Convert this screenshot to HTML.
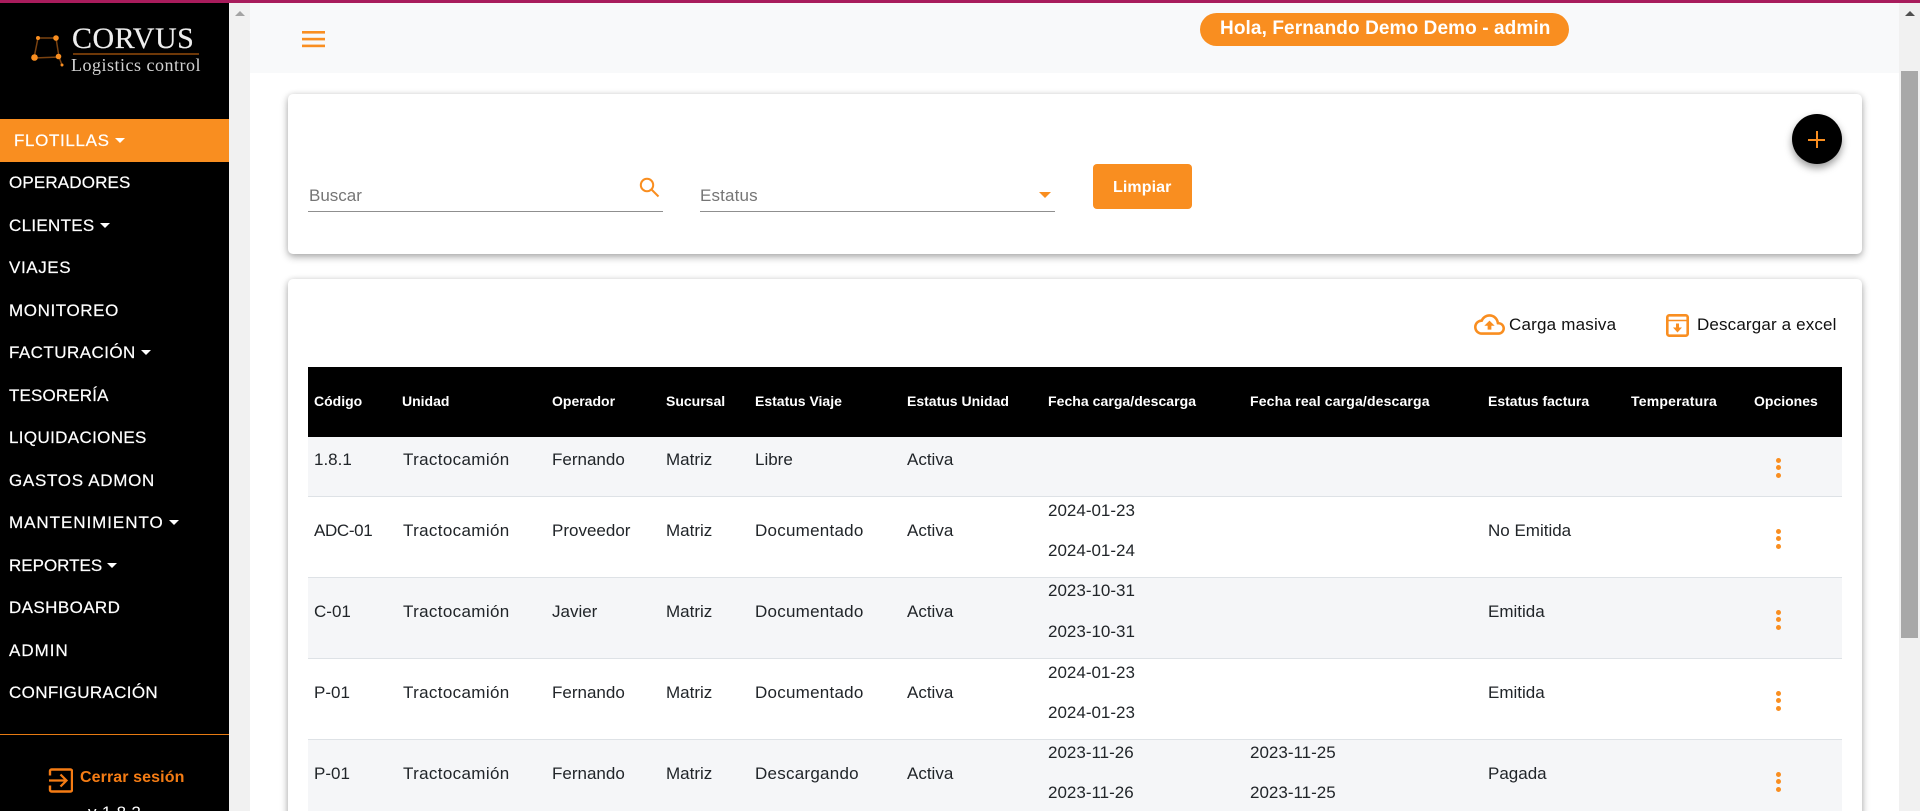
<!DOCTYPE html>
<html lang="es">
<head>
<meta charset="utf-8">
<title>Corvus</title>
<style>
html,body{margin:0;padding:0;width:1920px;height:811px;overflow:hidden;background:#fff;font-family:"Liberation Sans",Arial,sans-serif}
#p{position:relative;width:1920px;height:811px;overflow:hidden}
.a{position:absolute}
.t{position:absolute;white-space:nowrap;line-height:20px;height:20px}
.n{color:#fff;font-size:17px;left:9px;-webkit-text-stroke:.2px #fff}
.h{color:#fff;font-size:14px;font-weight:bold;top:391px}
.c{color:#212529;font-size:17px}
.tr{letter-spacing:.35px}
.doc{letter-spacing:.25px}
.r{position:absolute;left:308px;width:1534px;border-bottom:1px solid #dee2e6;box-sizing:border-box}
.card{position:absolute;left:288px;width:1574px;background:#fff;border-radius:5px;box-shadow:0 3px 8px rgba(0,0,0,.32),0 0 6px rgba(0,0,0,.08)}
.car{display:inline-block;width:0;height:0;border-left:5px solid transparent;border-right:5px solid transparent;border-top:5px solid #fff;vertical-align:3px;margin-left:5px;-webkit-text-stroke:0}
.d{position:absolute;left:1776px;width:5px;height:5px;border-radius:50%;background:#f98e20}
</style>
</head>
<body>
<div id="p">
  <!-- top strip -->
  <div class="a" style="left:0;top:0;width:1920px;height:3px;background:#a81c5c;z-index:9"></div>

  <!-- sidebar -->
  <div class="a" style="left:0;top:0;width:229px;height:811px;background:#000"></div>
  <svg class="a" style="left:25px;top:30px" width="45" height="42" viewBox="0 0 45 42">
    <path d="M13 8L31 8L34 27L9 28L13 8M34 27L37 35" fill="none" stroke="#7a4210" stroke-width="1.5"/>
    <circle cx="13" cy="8" r="2" fill="#f98e20"/><circle cx="31" cy="8" r="2.8" fill="#f98e20"/>
    <circle cx="9.5" cy="27.5" r="3.3" fill="#f98e20"/><circle cx="33.5" cy="26.5" r="2.8" fill="#f98e20"/><circle cx="37" cy="35" r="1.5" fill="#f98e20"/>
  </svg>
  <div class="t" style="left:72px;top:27px;height:24px;line-height:24px;font-family:'Liberation Serif',serif;font-size:30px;color:#eee;letter-spacing:.5px;-webkit-text-stroke:.2px #eee">CORVUS</div>
  <div class="a" style="left:73px;top:53px;width:126px;height:2px;background:#6e3808"></div>
  <div class="t" style="left:71px;top:55px;font-family:'Liberation Serif',serif;font-size:18px;color:#d2d2d2;letter-spacing:.5px">Logistics control</div>

  <div class="a" style="left:0;top:119px;width:229px;height:43px;background:#f98e20"></div>
  <div class="t n" style="left:14px;top:131px;letter-spacing:.65px">FLOTILLAS<span class="car"></span></div>
  <div class="t n" style="top:173px;letter-spacing:.15px">OPERADORES</div>
  <div class="t n" style="top:216px;letter-spacing:.3px">CLIENTES<span class="car"></span></div>
  <div class="t n" style="top:258px;letter-spacing:.6px">VIAJES</div>
  <div class="t n" style="top:301px;letter-spacing:.6px">MONITOREO</div>
  <div class="t n" style="top:343px;letter-spacing:.45px">FACTURACIÓN<span class="car"></span></div>
  <div class="t n" style="top:386px;letter-spacing:.15px">TESORERÍA</div>
  <div class="t n" style="top:428px;letter-spacing:.35px">LIQUIDACIONES</div>
  <div class="t n" style="top:471px;letter-spacing:.7px">GASTOS ADMON</div>
  <div class="t n" style="top:513px;letter-spacing:.95px">MANTENIMIENTO<span class="car"></span></div>
  <div class="t n" style="top:556px">REPORTES<span class="car"></span></div>
  <div class="t n" style="top:598px;letter-spacing:.4px">DASHBOARD</div>
  <div class="t n" style="top:641px;letter-spacing:1px">ADMIN</div>
  <div class="t n" style="top:683px;letter-spacing:.35px">CONFIGURACIÓN</div>
  <div class="a" style="left:0;top:734px;width:229px;height:1px;background:#e67a12"></div>
  <svg class="a" style="left:48px;top:768px" width="25" height="25" viewBox="0 0 25 25">
    <path d="M2 7.5V3a1.5 1.5 0 0 1 1.5-1.5h19A1.5 1.5 0 0 1 24 3v19a1.5 1.5 0 0 1-1.5 1.5h-19A1.5 1.5 0 0 1 2 22v-4.5" fill="none" stroke="#f57c14" stroke-width="2.4"/>
    <path d="M1 12.5h17M12.5 6.5l6 6-6 6" fill="none" stroke="#f57c14" stroke-width="2.2"/>
  </svg>
  <div class="t" style="left:80px;top:768px;font-size:16px;color:#f57c14;font-weight:bold;letter-spacing:.1px">Cerrar sesión</div>
  <div class="t" style="left:88px;top:803px;font-size:17px;color:#fff;letter-spacing:.3px">v 1.8.2</div>

  <!-- left scrollbar -->
  <div class="a" style="left:229px;top:3px;width:21px;height:808px;background:#f1f1f1"></div>
  <div class="a" style="left:235px;top:11px;width:0;height:0;border-left:5px solid transparent;border-right:5px solid transparent;border-bottom:5px solid #a3a3a3"></div>

  <!-- header -->
  <div class="a" style="left:250px;top:3px;width:1650px;height:70px;background:#f8f9fa"></div>
  <svg class="a" style="left:302px;top:30px" width="23" height="18" viewBox="0 0 23 18">
    <rect x="0" y="1" width="23" height="2.6" fill="#f98e20"/>
    <rect x="0" y="7.8" width="23" height="2.6" fill="#f98e20"/>
    <rect x="0" y="14.6" width="23" height="2.6" fill="#f98e20"/>
  </svg>
  <div class="a" style="left:1200px;top:13px;width:369px;height:33px;border-radius:17px;background:#f98e20"></div>
  <div class="t" style="left:1220px;top:19px;font-size:19px;font-weight:bold;color:#fff;letter-spacing:.1px">Hola, Fernando Demo Demo - admin</div>

  <!-- right scrollbar -->
  <div class="a" style="left:1899px;top:3px;width:21px;height:808px;background:#f1f1f1"></div>
  <div class="a" style="left:1905px;top:11px;width:0;height:0;border-left:5px solid transparent;border-right:5px solid transparent;border-bottom:5px solid #505050"></div>
  <div class="a" style="left:1901px;top:71px;width:17px;height:567px;background:#a8a8a8"></div>

  <!-- filter card -->
  <div class="card" style="top:94px;height:160px"></div>
  <div class="t" style="left:309px;top:186px;font-size:17px;color:#757575">Buscar</div>
  <div class="a" style="left:308px;top:211px;width:355px;height:1px;background:#8f8f8f"></div>
  <svg class="a" style="left:636px;top:174px" width="26" height="26" viewBox="0 0 26 26">
    <circle cx="11" cy="11" r="6.2" fill="none" stroke="#f98e20" stroke-width="2"/>
    <path d="M15.5 15.5L22.5 22.5" stroke="#f98e20" stroke-width="2"/>
  </svg>
  <div class="t" style="left:700px;top:186px;font-size:17px;color:#757575;letter-spacing:.15px">Estatus</div>
  <div class="a" style="left:700px;top:211px;width:355px;height:1px;background:#8f8f8f"></div>
  <div class="a" style="left:1039px;top:192px;width:0;height:0;border-left:6px solid transparent;border-right:6px solid transparent;border-top:6px solid #f98e20"></div>
  <div class="a" style="left:1093px;top:164px;width:99px;height:45px;border-radius:4px;background:#f98e20"></div>
  <div class="t" style="left:1113px;top:178px;font-size:16px;font-weight:bold;color:#fff;letter-spacing:.1px">Limpiar</div>
  <div class="a" style="left:1792px;top:114px;width:50px;height:50px;border-radius:50%;background:#000;box-shadow:0 4px 8px rgba(0,0,0,.4)"></div>
  <div class="a" style="left:1808px;top:139px;width:17px;height:2px;background:#f98e20"></div>
  <div class="a" style="left:1816px;top:131px;width:2px;height:17px;background:#f98e20"></div>

  <!-- table card -->
  <div class="card" style="top:279px;height:560px"></div>
  <svg class="a" style="left:1474px;top:309px" width="31" height="31" viewBox="0 0 24 24">
    <path fill="#f98e20" d="M19.35 10.04C18.67 6.59 15.64 4 12 4 9.11 4 6.6 5.64 5.35 8.04 2.34 8.36 0 10.91 0 14c0 3.31 2.69 6 6 6h13c2.76 0 5-2.24 5-5 0-2.64-2.05-4.78-4.65-4.96zM19 18H6c-2.21 0-4-1.79-4-4 0-2.05 1.53-3.76 3.56-3.97l1.07-.11.5-.95C8.08 7.14 9.94 6 12 6c2.62 0 4.88 1.86 5.39 4.43l.3 1.5 1.53.11c1.56.1 2.78 1.41 2.78 2.96 0 1.65-1.35 3-3 3zM8 13h2.55v3h2.9v-3H16l-4-4z"/>
  </svg>
  <div class="t" style="left:1509px;top:315px;font-size:17px;color:#111;letter-spacing:.2px">Carga masiva</div>
  <svg class="a" style="left:1666px;top:314px" width="23" height="23" viewBox="0 0 23 23">
    <rect x="1.3" y="1.3" width="20.4" height="20.4" rx="2" fill="none" stroke="#f98e20" stroke-width="2.6"/>
    <path d="M1.2 6.5H21.8" stroke="#f98e20" stroke-width="1.6"/>
    <path d="M10 9.5h3v4h3l-4.5 5-4.5-5h3z" fill="#f98e20"/>
  </svg>
  <div class="t" style="left:1697px;top:315px;font-size:17px;color:#111;letter-spacing:.15px">Descargar a excel</div>

  <!-- table -->
  <div class="a" style="left:308px;top:367px;width:1534px;height:70px;background:#000"></div>
  <div class="t h" style="left:314px">Código</div>
  <div class="t h" style="left:402px">Unidad</div>
  <div class="t h" style="left:552px">Operador</div>
  <div class="t h" style="left:666px">Sucursal</div>
  <div class="t h" style="left:755px">Estatus Viaje</div>
  <div class="t h" style="left:907px">Estatus Unidad</div>
  <div class="t h" style="left:1048px;letter-spacing:.05px">Fecha carga/descarga</div>
  <div class="t h" style="left:1250px;letter-spacing:.15px">Fecha real carga/descarga</div>
  <div class="t h" style="left:1488px">Estatus factura</div>
  <div class="t h" style="left:1631px;letter-spacing:.2px">Temperatura</div>
  <div class="t h" style="left:1754px">Opciones</div>

  <div class="r" style="top:437px;height:60px;background:#f5f6f8"></div>
  <div class="r" style="top:497px;height:81px;background:#fff"></div>
  <div class="r" style="top:578px;height:81px;background:#f5f6f8"></div>
  <div class="r" style="top:659px;height:81px;background:#fff"></div>
  <div class="r" style="top:740px;height:71px;background:#f5f6f8;border-bottom:0"></div>

  <!-- row 1 -->
  <div class="t c" style="left:314px;top:450px">1.8.1</div>
  <div class="t c tr" style="left:403px;top:450px">Tractocamión</div>
  <div class="t c" style="left:552px;top:450px">Fernando</div>
  <div class="t c" style="left:666px;top:450px">Matriz</div>
  <div class="t c" style="left:755px;top:450px">Libre</div>
  <div class="t c" style="left:907px;top:450px">Activa</div>
  <div class="d" style="top:458px"></div><div class="d" style="top:465px"></div><div class="d" style="top:473px"></div>

  <!-- row 2 -->
  <div class="t c" style="left:314px;top:521px;letter-spacing:-.35px">ADC-01</div>
  <div class="t c tr" style="left:403px;top:521px">Tractocamión</div>
  <div class="t c" style="left:552px;top:521px">Proveedor</div>
  <div class="t c" style="left:666px;top:521px">Matriz</div>
  <div class="t c doc" style="left:755px;top:521px">Documentado</div>
  <div class="t c" style="left:907px;top:521px">Activa</div>
  <div class="t c" style="left:1048px;top:501px">2024-01-23</div>
  <div class="t c" style="left:1048px;top:541px">2024-01-24</div>
  <div class="t c" style="left:1488px;top:521px">No Emitida</div>
  <div class="d" style="top:529px"></div><div class="d" style="top:536px"></div><div class="d" style="top:544px"></div>

  <!-- row 3 -->
  <div class="t c" style="left:314px;top:602px">C-01</div>
  <div class="t c tr" style="left:403px;top:602px">Tractocamión</div>
  <div class="t c" style="left:552px;top:602px">Javier</div>
  <div class="t c" style="left:666px;top:602px">Matriz</div>
  <div class="t c doc" style="left:755px;top:602px">Documentado</div>
  <div class="t c" style="left:907px;top:602px">Activa</div>
  <div class="t c" style="left:1048px;top:581px">2023-10-31</div>
  <div class="t c" style="left:1048px;top:622px">2023-10-31</div>
  <div class="t c" style="left:1488px;top:602px">Emitida</div>
  <div class="d" style="top:610px"></div><div class="d" style="top:617px"></div><div class="d" style="top:625px"></div>

  <!-- row 4 -->
  <div class="t c" style="left:314px;top:683px">P-01</div>
  <div class="t c tr" style="left:403px;top:683px">Tractocamión</div>
  <div class="t c" style="left:552px;top:683px">Fernando</div>
  <div class="t c" style="left:666px;top:683px">Matriz</div>
  <div class="t c doc" style="left:755px;top:683px">Documentado</div>
  <div class="t c" style="left:907px;top:683px">Activa</div>
  <div class="t c" style="left:1048px;top:663px">2024-01-23</div>
  <div class="t c" style="left:1048px;top:703px">2024-01-23</div>
  <div class="t c" style="left:1488px;top:683px">Emitida</div>
  <div class="d" style="top:691px"></div><div class="d" style="top:698px"></div><div class="d" style="top:706px"></div>

  <!-- row 5 -->
  <div class="t c" style="left:314px;top:764px">P-01</div>
  <div class="t c tr" style="left:403px;top:764px">Tractocamión</div>
  <div class="t c" style="left:552px;top:764px">Fernando</div>
  <div class="t c" style="left:666px;top:764px">Matriz</div>
  <div class="t c doc" style="left:755px;top:764px">Descargando</div>
  <div class="t c" style="left:907px;top:764px">Activa</div>
  <div class="t c" style="left:1048px;top:743px">2023-11-26</div>
  <div class="t c" style="left:1048px;top:783px">2023-11-26</div>
  <div class="t c" style="left:1250px;top:743px">2023-11-25</div>
  <div class="t c" style="left:1250px;top:783px">2023-11-25</div>
  <div class="t c" style="left:1488px;top:764px">Pagada</div>
  <div class="d" style="top:772px"></div><div class="d" style="top:779px"></div><div class="d" style="top:787px"></div>
</div>
</body>
</html>
